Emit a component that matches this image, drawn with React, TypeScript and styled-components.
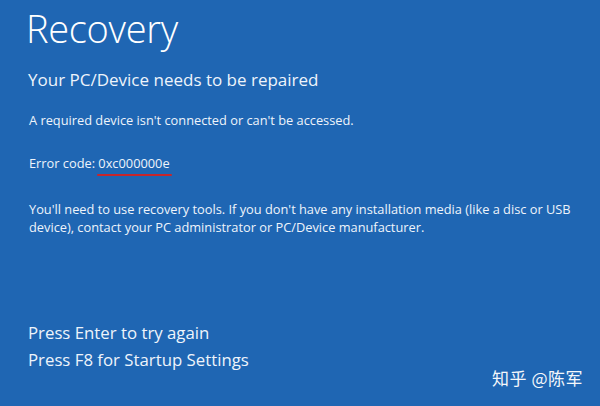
import React from 'react'
import styled, { createGlobalStyle } from 'styled-components'

const GlobalStyle = createGlobalStyle`
  html, body {
    margin: 0;
    padding: 0;
    background: #1f66b3;
  }
`

const Screen = styled.div`
  position: relative;
  width: 600px;
  height: 406px;
  overflow: hidden;
  box-sizing: border-box;
  padding: 5px 0 0 28px;
  background: #1f66b3;
  color: #ffffff;
  font-family: "Open Sans", "Noto Sans", sans-serif;
  display: flex;
  flex-direction: column;
`

const Title = styled.h1`
  margin: 0 0 0 -2px;
  font-size: 38px;
  font-weight: 300;
  line-height: 46px;
  letter-spacing: -0.3px;
`

const Subtitle = styled.h2`
  margin: 17px 0 0 0;
  font-size: 17px;
  font-weight: 400;
  line-height: 24px;
  color: #eef4fb;
`

const Text = styled.p<{ $gap: number }>`
  margin: ${(p) => p.$gap}px 0 0 1px;
  font-size: 12.8px;
  line-height: 18px;
  color: #eef4fb;
  width: 545px;
`

const Code = styled.span`
  position: relative;
  &::after {
    content: '';
    position: absolute;
    left: -1px;
    right: -2px;
    bottom: -4px;
    height: 2px;
    border-radius: 1px;
    background: #c8262b;
  }
`

const Actions = styled.div`
  margin-top: auto;
  margin-bottom: 33px;
  display: flex;
  flex-direction: column;
`

const Action = styled.div`
  font-size: 16.8px;
  line-height: 27px;
  color: #eef4fb;
`

const Watermark = styled.div`
  position: absolute;
  right: 17px;
  bottom: 16px;
  font-family: "Noto Sans CJK SC", sans-serif;
  font-size: 17px;
  color: #f4f7fb;
  letter-spacing: 0.5px;
`

export default function App() {
  return (
    <>
      <GlobalStyle />
      <Screen>
        <Title>Recovery</Title>
        <Subtitle>Your PC/Device needs to be repaired</Subtitle>
        <Text $gap={19}>A required device isn't connected or can't be accessed.</Text>
        <Text $gap={25}>
          Error code: <Code>0xc000000e</Code>
        </Text>
        <Text $gap={28}>
          You'll need to use recovery tools. If you don't have any installation media (like a disc or USB
          device), contact your PC administrator or PC/Device manufacturer.
        </Text>
        <Actions>
          <Action>Press Enter to try again</Action>
          <Action>Press F8 for Startup Settings</Action>
        </Actions>
        <Watermark>知乎 @陈军</Watermark>
      </Screen>
    </>
  )
}
